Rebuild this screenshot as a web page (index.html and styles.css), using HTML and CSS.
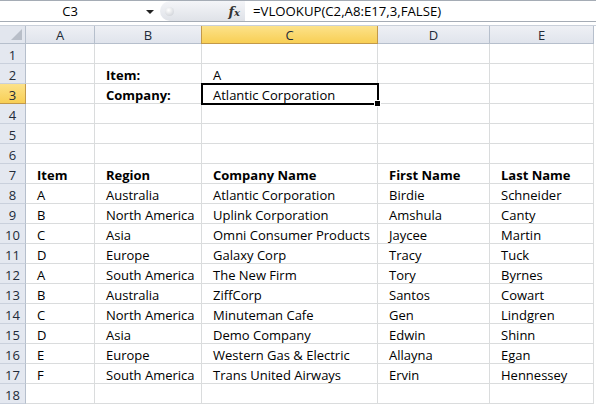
FILE: index.html
```html
<!DOCTYPE html>
<html>
<head>
<meta charset="utf-8">
<link rel="stylesheet" href="styles.css">
</head>
<body>
<div class="app">
  <div class="fbar">
    <div class="namebox"><span class="ref">C3</span><span class="arrow"></span></div>
    <div class="pill"><span class="grip"></span><span class="fx">f<i>x</i></span></div>
    <div class="formula">=VLOOKUP(C2,A8:E17,3,FALSE)</div>
  </div>
  <div class="gap"></div>
  <div class="sheet">
    <div class="corner"><span class="tri"></span></div>
    <div class="ch">A</div><div class="ch">B</div><div class="ch sel">C</div><div class="ch">D</div><div class="ch">E</div>

    <div class="rh">1</div><div class="c"></div><div class="c"></div><div class="c"></div><div class="c"></div><div class="c"></div>
    <div class="rh">2</div><div class="c"></div><div class="c b">Item:</div><div class="c">A</div><div class="c"></div><div class="c"></div>
    <div class="rh sel">3</div><div class="c"></div><div class="c b">Company:</div><div class="c active">Atlantic Corporation<span class="handle"></span></div><div class="c"></div><div class="c"></div>
    <div class="rh">4</div><div class="c"></div><div class="c"></div><div class="c"></div><div class="c"></div><div class="c"></div>
    <div class="rh">5</div><div class="c"></div><div class="c"></div><div class="c"></div><div class="c"></div><div class="c"></div>
    <div class="rh">6</div><div class="c"></div><div class="c"></div><div class="c"></div><div class="c"></div><div class="c"></div>
    <div class="rh">7</div><div class="c b">Item</div><div class="c b">Region</div><div class="c b">Company Name</div><div class="c b">First Name</div><div class="c b">Last Name</div>
    <div class="rh">8</div><div class="c">A</div><div class="c">Australia</div><div class="c">Atlantic Corporation</div><div class="c">Birdie</div><div class="c">Schneider</div>
    <div class="rh">9</div><div class="c">B</div><div class="c">North America</div><div class="c">Uplink Corporation</div><div class="c">Amshula</div><div class="c">Canty</div>
    <div class="rh">10</div><div class="c">C</div><div class="c">Asia</div><div class="c">Omni Consumer Products</div><div class="c">Jaycee</div><div class="c">Martin</div>
    <div class="rh">11</div><div class="c">D</div><div class="c">Europe</div><div class="c">Galaxy Corp</div><div class="c">Tracy</div><div class="c">Tuck</div>
    <div class="rh">12</div><div class="c">A</div><div class="c">South America</div><div class="c">The New Firm</div><div class="c">Tory</div><div class="c">Byrnes</div>
    <div class="rh">13</div><div class="c">B</div><div class="c">Australia</div><div class="c">ZiffCorp</div><div class="c">Santos</div><div class="c">Cowart</div>
    <div class="rh">14</div><div class="c">C</div><div class="c">North America</div><div class="c">Minuteman Cafe</div><div class="c">Gen</div><div class="c">Lindgren</div>
    <div class="rh">15</div><div class="c">D</div><div class="c">Asia</div><div class="c">Demo Company</div><div class="c">Edwin</div><div class="c">Shinn</div>
    <div class="rh">16</div><div class="c">E</div><div class="c">Europe</div><div class="c">Western Gas &amp; Electric</div><div class="c">Allayna</div><div class="c">Egan</div>
    <div class="rh">17</div><div class="c">F</div><div class="c">South America</div><div class="c">Trans United Airways</div><div class="c">Ervin</div><div class="c">Hennessey</div>
    <div class="rh">18</div><div class="c"></div><div class="c"></div><div class="c"></div><div class="c"></div><div class="c"></div>
  </div>
</div>
</body>
</html>
```
FILE: styles.css
```css
html, body { margin: 0; padding: 0; background: #ffffff; }
body { width: 596px; height: 406px; overflow: hidden; font-family: "Open Sans", "Noto Sans", sans-serif; font-size: 13px; color: #000; }
.app { width: 596px; }
.fbar { height: 20px; border-top: 1px solid #a5acb5; border-bottom: 1px solid #a5acb5; display: flex; background: #fff; }
.namebox { width: 160px; position: relative; display: flex; align-items: center; }
.ref { width: 140px; text-align: center; font-size: 13px; }
.arrow { width: 0; height: 0; border-left: 4px solid transparent; border-right: 4px solid transparent; border-top: 4px solid #222; margin-left: 6px; margin-top: 2px; }
.pill { width: 85px; background: linear-gradient(#f4f5f8, #dfe2e8); border-radius: 10px 0 0 10px; display: flex; align-items: center; position: relative; }
.grip { width: 9px; height: 9px; border-radius: 50%; background: radial-gradient(circle at 40% 35%, #ffffff, #c5c9d0); margin-left: 5px; }
.fx { margin-left: auto; margin-right: 5px; font-family: "DejaVu Serif", "Liberation Serif", serif; font-style: italic; font-weight: bold; font-size: 13px; color: #333; }
.fx i { font-size: 10px; }
.formula { flex: 1; padding-left: 8px; display: flex; align-items: center; font-size: 13.2px; }
.gap { height: 3px; background: #fff; border-bottom: 1px solid #c9d0da; }
.sheet { display: grid; grid-template-columns: 26px 69px 107px 176px 112px 104px; grid-template-rows: 18px repeat(18, 20px); border-right: 1px solid #fff; }
.corner { background: #e2e6ee; border-right: 1px solid #b6bfcc; border-bottom: 1px solid #b6bfcc; position: relative; box-sizing: border-box; }
.tri { position: absolute; right: 3px; bottom: 3px; width: 0; height: 0; border-left: 11px solid transparent; border-bottom: 11px solid #b8bec8; }
.ch { background: linear-gradient(#eef0f5, #e0e4ec); border-right: 1px solid #b6bfcc; border-bottom: 1px solid #b6bfcc; box-sizing: border-box; display: flex; align-items: center; justify-content: center; color: #222b38; font-size: 13px; padding-top: 1px; }
.ch.sel { background: linear-gradient(#fce28a, #f8cf55); border-left: 1px solid #c2994a; border-right: 1px solid #c2994a; border-bottom-color: #c2994a; margin-left: -1px; }
.rh { background: #e4e8f0; border-right: 1px solid #b6bfcc; border-bottom: 1px solid #c9d0dc; box-sizing: border-box; display: flex; align-items: center; justify-content: center; color: #222b38; font-size: 13px; padding-top: 2px; }
.rh.sel { background: linear-gradient(#fce28a, #f8cf55); border-bottom-color: #c2994a; border-right-color: #c2994a; }
.c { border-right: 1px solid #dadcdd; border-bottom: 1px solid #dadcdd; box-sizing: border-box; padding: 3px 0 0 11px; display: flex; align-items: center; white-space: nowrap; overflow: visible; }
.b { font-weight: bold; }
.active { position: relative; outline: 2px solid #000; outline-offset: -1px; z-index: 2; }
.handle { position: absolute; right: -4px; bottom: -4px; width: 5px; height: 5px; background: #000; border: 1px solid #fff; z-index: 3; }
```
